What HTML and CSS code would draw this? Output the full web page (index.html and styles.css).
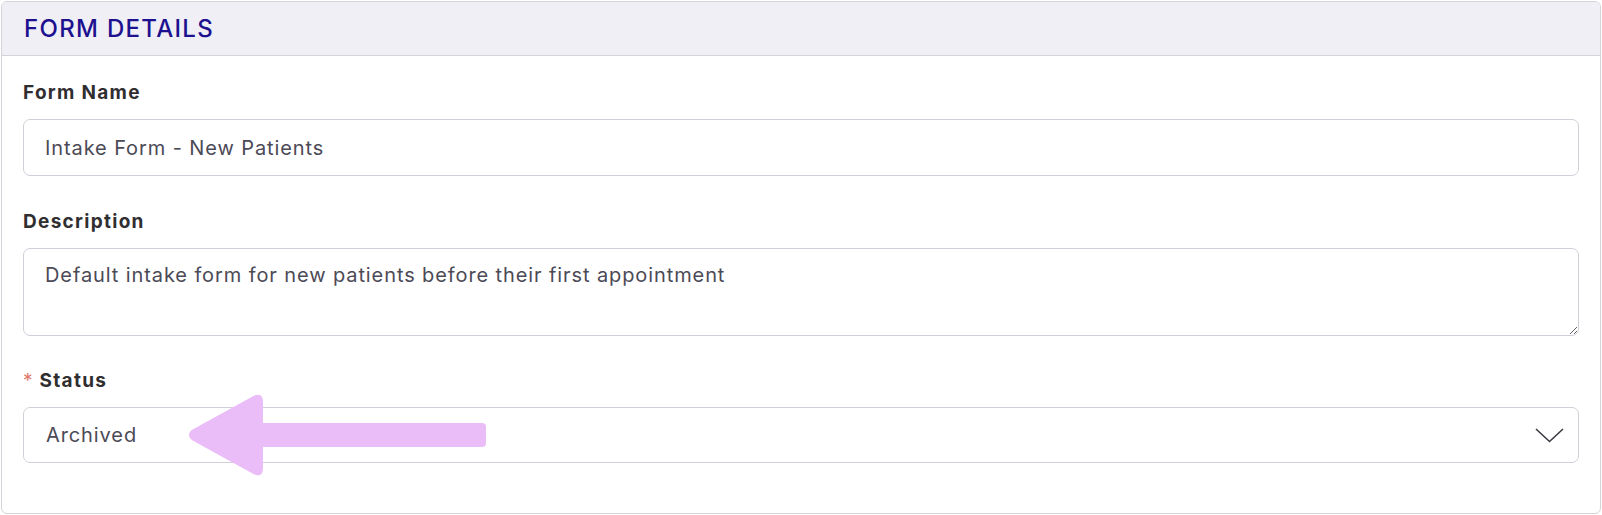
FILE: index.html
```html
<!DOCTYPE html>
<html lang="en">
<head>
<meta charset="utf-8">
<title>Form Details</title>
<link rel="stylesheet" href="styles.css">
</head>
<body>
<section class="card">
  <header class="card-header">
    <h2 class="card-title">FORM DETAILS</h2>
  </header>
  <div class="card-body">
    <div class="field">
      <label class="field-label" for="form-name">Form Name</label>
      <input class="text-input" id="form-name" type="text" value="Intake Form - New Patients">
    </div>
    <div class="field field-tight">
      <label class="field-label" for="form-desc">Description</label>
      <textarea class="text-area" id="form-desc">Default intake form for new patients before their first appointment</textarea>
    </div>
    <div class="field field-last">
      <label class="field-label" for="form-status"><span class="required">*</span>Status</label>
      <div class="select-wrap">
        <div class="select-box" id="form-status">
          <span class="select-value">Archived</span>
          <svg class="chevron" width="29" height="15" viewBox="0 0 29 15"><path d="M1 1 L14.5 13.5 L28 1" fill="none" stroke="#3b3b44" stroke-width="1.6"/></svg>
        </div>
        <svg class="callout-arrow" width="310" height="86" viewBox="0 0 310 86">
          <path d="M75 9 Q75 1 68 5 L8 38 Q2 42 8 46 L68 79 Q75 83 75 75 Z" fill="#eabcf8" stroke="#eabcf8" stroke-width="4" stroke-linejoin="round"/>
          <rect x="71" y="30" width="229" height="24" rx="4" fill="#eabcf8"/>
        </svg>
      </div>
    </div>
  </div>
</section>
</body>
</html>
```

FILE: styles.css
```css
* { box-sizing: border-box; }

body {
  margin: 1px;
  background: #ffffff;
  font-family: "Inter", "Liberation Sans", sans-serif;
}

.card {
  width: 1600px;
  border: 1px solid #d3d3da;
  border-radius: 6px;
  background: #ffffff;
  overflow: hidden;
}

.card-header {
  height: 54px;
  display: flex;
  align-items: center;
  padding: 0 22px;
  background: #efeff5;
  border-bottom: 1px solid #d3d3da;
}

.card-title {
  margin: 0;
  font-size: 24px;
  font-weight: 500;
  color: #1d1190;
  letter-spacing: 1.3px;
}

.card-body {
  padding: 25px 21px 50px 21px;
}

.field {
  margin-bottom: 34px;
}

.field-tight {
  margin-bottom: 33px;
}

.field-last {
  margin-bottom: 0;
}

.field-label {
  display: block;
  margin-bottom: 14px;
  font-size: 19px;
  line-height: 24px;
  font-weight: 700;
  color: #302e30;
  letter-spacing: 1.3px;
}

.required {
  color: #e0786b;
  font-weight: 400;
  letter-spacing: 0;
  margin-right: 7px;
}

.text-input,
.text-area,
.select-box {
  display: block;
  width: 100%;
  border: 1px solid #d0d0d8;
  border-radius: 7px;
  background: #ffffff;
  font-family: "Inter", "Liberation Sans", sans-serif;
  font-size: 20px;
  letter-spacing: 0.9px;
  color: #4b4a56;
  outline: none;
}

.text-input {
  height: 57px;
  padding: 0 21px;
}

.text-area {
  height: 88px;
  padding: 11px 21px;
  line-height: 30px;
  resize: vertical;
}

.select-wrap {
  position: relative;
}

.select-box {
  height: 56px;
  padding: 0 14px 0 22px;
  display: flex;
  align-items: center;
  justify-content: space-between;
}

.chevron {
  display: block;
}

.callout-arrow {
  position: absolute;
  left: 163px;
  top: -14px;
  pointer-events: none;
}
```
